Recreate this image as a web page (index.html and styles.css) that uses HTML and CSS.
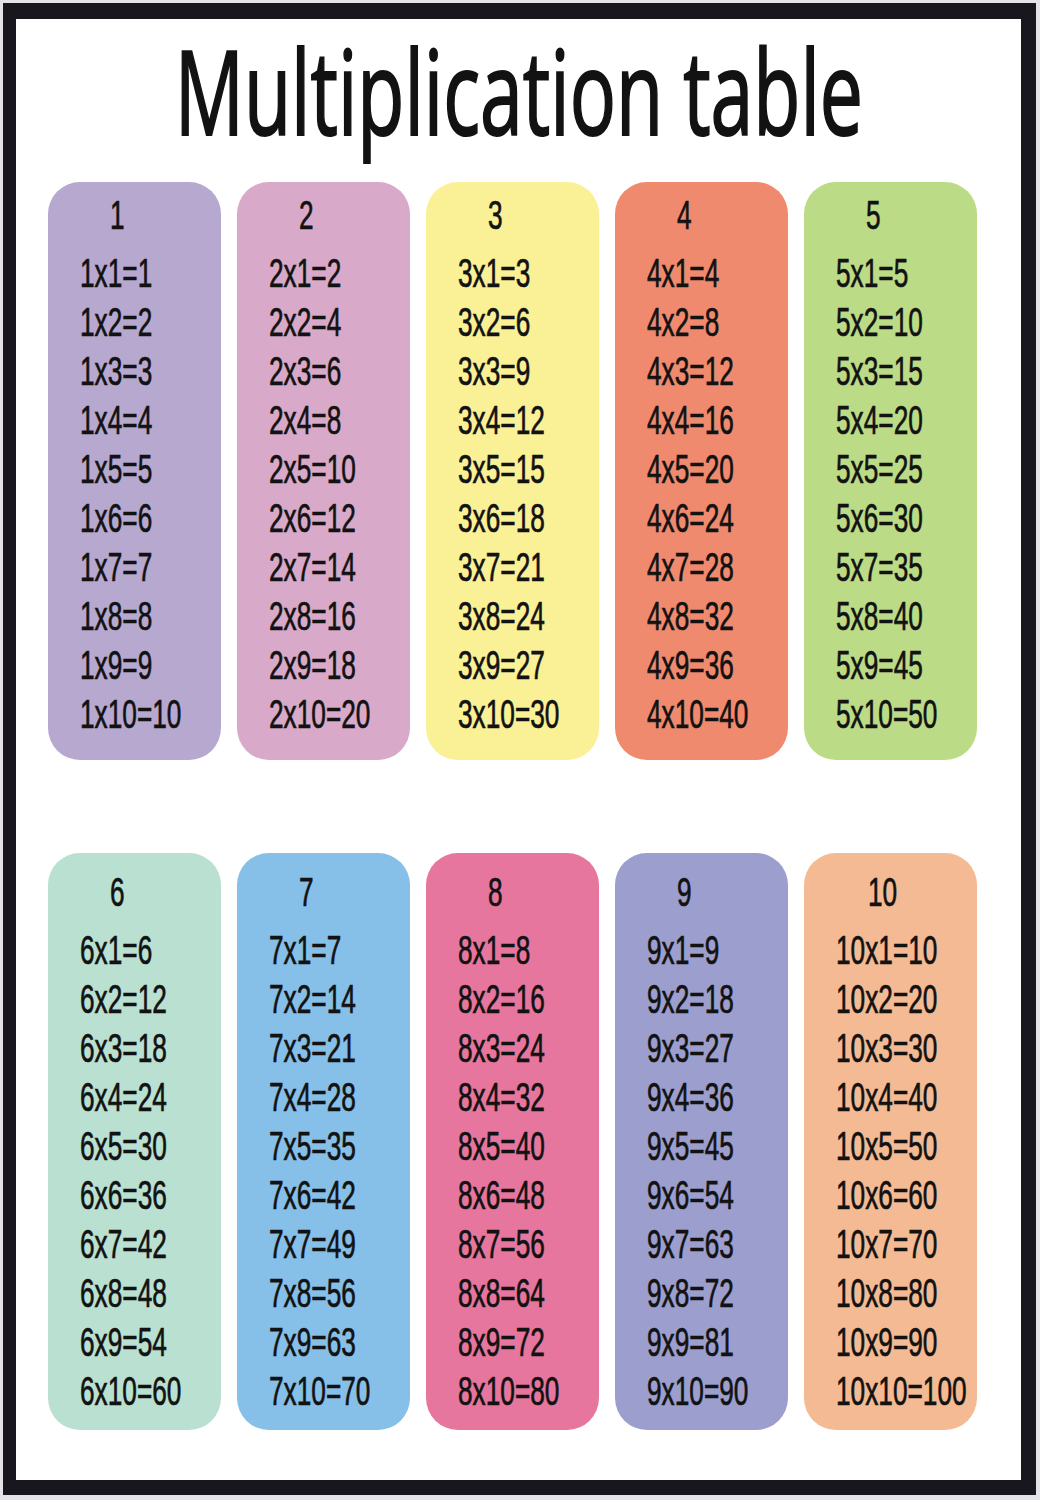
FILE: index.html
```html
<!DOCTYPE html>
<html>
<head>
<meta charset="utf-8">
<link rel="stylesheet" href="styles.css">
</head>
<body>
<div class="frame">
  <h1 class="title"><span class="title-text">Multiplication table</span></h1>
  <div class="grid">
    <div class="card c1"><div class="txt"><div class="head">1</div><div>1x1=1</div><div>1x2=2</div><div>1x3=3</div><div>1x4=4</div><div>1x5=5</div><div>1x6=6</div><div>1x7=7</div><div>1x8=8</div><div>1x9=9</div><div>1x10=10</div></div></div>
    <div class="card c2"><div class="txt"><div class="head">2</div><div>2x1=2</div><div>2x2=4</div><div>2x3=6</div><div>2x4=8</div><div>2x5=10</div><div>2x6=12</div><div>2x7=14</div><div>2x8=16</div><div>2x9=18</div><div>2x10=20</div></div></div>
    <div class="card c3"><div class="txt"><div class="head">3</div><div>3x1=3</div><div>3x2=6</div><div>3x3=9</div><div>3x4=12</div><div>3x5=15</div><div>3x6=18</div><div>3x7=21</div><div>3x8=24</div><div>3x9=27</div><div>3x10=30</div></div></div>
    <div class="card c4"><div class="txt"><div class="head">4</div><div>4x1=4</div><div>4x2=8</div><div>4x3=12</div><div>4x4=16</div><div>4x5=20</div><div>4x6=24</div><div>4x7=28</div><div>4x8=32</div><div>4x9=36</div><div>4x10=40</div></div></div>
    <div class="card c5"><div class="txt"><div class="head">5</div><div>5x1=5</div><div>5x2=10</div><div>5x3=15</div><div>5x4=20</div><div>5x5=25</div><div>5x6=30</div><div>5x7=35</div><div>5x8=40</div><div>5x9=45</div><div>5x10=50</div></div></div>
  </div>
  <div class="grid grid2">
    <div class="card c6"><div class="txt"><div class="head">6</div><div>6x1=6</div><div>6x2=12</div><div>6x3=18</div><div>6x4=24</div><div>6x5=30</div><div>6x6=36</div><div>6x7=42</div><div>6x8=48</div><div>6x9=54</div><div>6x10=60</div></div></div>
    <div class="card c7"><div class="txt"><div class="head">7</div><div>7x1=7</div><div>7x2=14</div><div>7x3=21</div><div>7x4=28</div><div>7x5=35</div><div>7x6=42</div><div>7x7=49</div><div>7x8=56</div><div>7x9=63</div><div>7x10=70</div></div></div>
    <div class="card c8"><div class="txt"><div class="head">8</div><div>8x1=8</div><div>8x2=16</div><div>8x3=24</div><div>8x4=32</div><div>8x5=40</div><div>8x6=48</div><div>8x7=56</div><div>8x8=64</div><div>8x9=72</div><div>8x10=80</div></div></div>
    <div class="card c9"><div class="txt"><div class="head">9</div><div>9x1=9</div><div>9x2=18</div><div>9x3=27</div><div>9x4=36</div><div>9x5=45</div><div>9x6=54</div><div>9x7=63</div><div>9x8=72</div><div>9x9=81</div><div>9x10=90</div></div></div>
    <div class="card c10"><div class="txt"><div class="head">10</div><div>10x1=10</div><div>10x2=20</div><div>10x3=30</div><div>10x4=40</div><div>10x5=50</div><div>10x6=60</div><div>10x7=70</div><div>10x8=80</div><div>10x9=90</div><div>10x10=100</div></div></div>
  </div>
</div>
</body>
</html>
```

FILE: styles.css
```css
html, body {
  margin: 0;
  padding: 0;
}
body {
  background: #e4e4e6;
  width: 1040px;
  height: 1500px;
  font-family: "Liberation Sans", Arial, sans-serif;
  color: #121212;
}
.frame {
  box-sizing: border-box;
  margin: 3px 0 0 3px;
  width: 1033px;
  height: 1492px;
  border-style: solid;
  border-color: #17171d;
  border-width: 16px 15px 15px 13px;
  background: #ffffff;
}
.title {
  margin: 0;
  padding-top: 12px;
  height: 118px;
  display: flex;
  justify-content: center;
  font-family: "Open Sans", "DejaVu Sans", sans-serif;
  font-size: 118px;
  line-height: 118px;
  font-weight: 400;
  white-space: nowrap;
}
.title-text {
  display: block;
  flex: none;
  transform: scaleX(0.652);
  transform-origin: center;
  -webkit-text-stroke: 2px #121212;
}
.grid {
  display: grid;
  grid-template-columns: repeat(5, 173px);
  column-gap: 16px;
  margin: 33px 0 0 32px;
}
.grid2 {
  margin-top: 93px;
}
.card {
  height: 578px;
  border-radius: 32px;
  box-sizing: border-box;
  padding: 9px 0 0 32px;
  overflow: hidden;
}
.grid2 .card {
  height: 577px;
  padding-top: 15px;
}
.txt {
  font-size: 41px;
  line-height: 49px;
  white-space: nowrap;
  transform: scaleX(0.64);
  transform-origin: left top;
  -webkit-text-stroke: 0.7px #121212;
}
.head {
  padding-left: 47px;
  margin-bottom: 9px;
}
.c1 { background: #b7a8d0; }
.c2 { background: #d8a9c8; }
.c3 { background: #faf095; }
.c4 { background: #ef8a6e; }
.c5 { background: #bcdb86; }
.c6 { background: #b9e0d0; }
.c7 { background: #86bfe8; }
.c8 { background: #e6769d; }
.c9 { background: #9c9ecd; }
.c10 { background: #f4ba93; }
.c10 .head { padding-left: 50px; }
```
